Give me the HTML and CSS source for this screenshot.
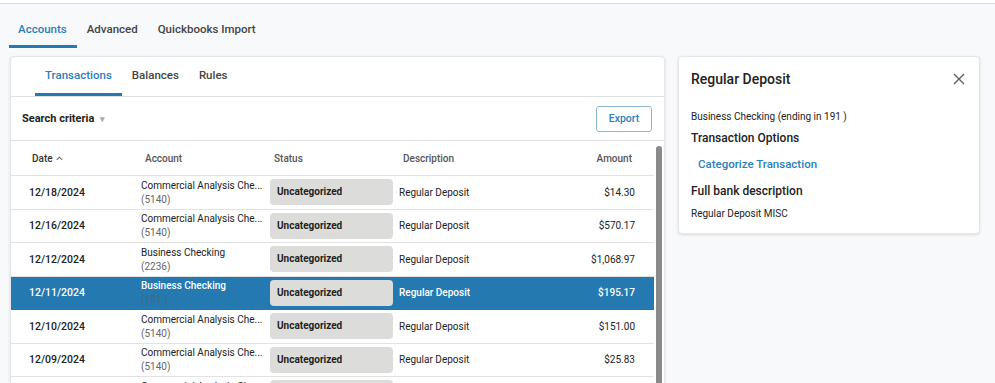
FILE: index.html
```html
<!DOCTYPE html>
<html lang="en">
<head>
    <meta charset="UTF-8">
    <meta name="viewport" content="width=device-width, initial-scale=1.0">
    <title>Accounts - Transactions</title>
    <link rel="stylesheet" href="styles.css">
</head>
<body>
    <div class="topbar"></div>

    <div class="main-tabs">
        <div class="tab active">Accounts</div>
        <div class="tab">Advanced</div>
        <div class="tab">Quickbooks Import</div>
    </div>

    <div class="layout">
        <div class="card list-card">
            <div class="sub-tabs">
                <div class="tab active">Transactions</div>
                <div class="tab">Balances</div>
                <div class="tab">Rules</div>
            </div>

            <div class="search-row">
                <div class="search-toggle">Search criteria <span class="caret">&#9662;</span></div>
                <button class="btn-outline">Export</button>
            </div>

            <div class="table-wrap">
                <div class="table">
                    <div class="row head">
                        <div class="cell date">Date
                            <svg class="sort" width="9" height="9" viewBox="0 0 10 10"><path d="M2 6.5 L5 3.5 L8 6.5" fill="none" stroke="#666" stroke-width="1.2"/></svg>
                        </div>
                        <div class="cell">Account</div>
                        <div class="cell">Status</div>
                        <div class="cell">Description</div>
                        <div class="cell amount">Amount</div>
                    </div>

                    <div class="row">
                        <div class="cell date">12/18/2024</div>
                        <div class="cell account"><span>Commercial Analysis Che...</span><span class="acct-no">(5140)</span></div>
                        <div class="cell"><span class="chip">Uncategorized</span></div>
                        <div class="cell">Regular Deposit</div>
                        <div class="cell amount">$14.30</div>
                    </div>
                    <div class="row">
                        <div class="cell date">12/16/2024</div>
                        <div class="cell account"><span>Commercial Analysis Che...</span><span class="acct-no">(5140)</span></div>
                        <div class="cell"><span class="chip">Uncategorized</span></div>
                        <div class="cell">Regular Deposit</div>
                        <div class="cell amount">$570.17</div>
                    </div>
                    <div class="row">
                        <div class="cell date">12/12/2024</div>
                        <div class="cell account"><span>Business Checking</span><span class="acct-no">(2236)</span></div>
                        <div class="cell"><span class="chip">Uncategorized</span></div>
                        <div class="cell">Regular Deposit</div>
                        <div class="cell amount">$1,068.97</div>
                    </div>
                    <div class="row selected">
                        <div class="cell date">12/11/2024</div>
                        <div class="cell account"><span>Business Checking</span><span class="acct-no">(191 )</span></div>
                        <div class="cell"><span class="chip">Uncategorized</span></div>
                        <div class="cell">Regular Deposit</div>
                        <div class="cell amount">$195.17</div>
                    </div>
                    <div class="row">
                        <div class="cell date">12/10/2024</div>
                        <div class="cell account"><span>Commercial Analysis Che...</span><span class="acct-no">(5140)</span></div>
                        <div class="cell"><span class="chip">Uncategorized</span></div>
                        <div class="cell">Regular Deposit</div>
                        <div class="cell amount">$151.00</div>
                    </div>
                    <div class="row">
                        <div class="cell date">12/09/2024</div>
                        <div class="cell account"><span>Commercial Analysis Che...</span><span class="acct-no">(5140)</span></div>
                        <div class="cell"><span class="chip">Uncategorized</span></div>
                        <div class="cell">Regular Deposit</div>
                        <div class="cell amount">$25.83</div>
                    </div>
                    <div class="row">
                        <div class="cell date">12/06/2024</div>
                        <div class="cell account"><span>Commercial Analysis Che...</span><span class="acct-no">(5140)</span></div>
                        <div class="cell"><span class="chip">Uncategorized</span></div>
                        <div class="cell">Regular Deposit</div>
                        <div class="cell amount">$88.40</div>
                    </div>
                </div>
                <div class="scroll-track"><div class="scroll-thumb"></div></div>
            </div>
        </div>

        <div class="card detail-card">
            <div class="detail-head">
                <h2>Regular Deposit</h2>
                <svg class="close" width="12" height="12" viewBox="0 0 12 12"><path d="M1 1 L11 11 M11 1 L1 11" stroke="#5f5f5f" stroke-width="1.4"/></svg>
            </div>
            <p class="small">Business Checking (ending in 191 )</p>
            <h3>Transaction Options</h3>
            <a class="link" href="#">Categorize Transaction</a>
            <h3>Full bank description</h3>
            <p class="small">Regular Deposit MISC</p>
        </div>
    </div>
</body>
</html>
```

FILE: styles.css
```css
* {
    margin: 0;
    padding: 0;
    box-sizing: border-box;
    font-family: Roboto, "Liberation Sans", Arial, sans-serif;
}

body {
    background: #f8f9fb;
    color: #222;
    height: 383px;
    overflow: hidden;
}

.topbar {
    height: 4px;
    background: #fff;
    border-bottom: 1px solid #dcdcdc;
}

.main-tabs {
    display: flex;
    padding-left: 9px;
}

.tab {
    padding: 18px 10px 9px;
    line-height: 14px;
    font-size: 11.5px;
    font-weight: 500;
    color: #444;
    border-bottom: 3px solid transparent;
}

.main-tabs .tab:first-child {
    padding-left: 9px;
}

.tab.active {
    color: #2a7fba;
    border-bottom-color: #2479b0;
}

.layout {
    display: flex;
    gap: 13px;
    margin: 8px 15px 0 10px;
    align-items: flex-start;
}

.card {
    background: #fff;
    border: 1px solid #e4e6ea;
    border-radius: 4px;
    box-shadow: 0 1px 3px rgba(0,0,0,0.12);
}

.list-card {
    width: 655px;
    flex-shrink: 0;
}

.sub-tabs {
    display: flex;
    padding-left: 24px;
    border-bottom: 1px solid #e0e0e0;
}

.sub-tabs .tab {
    padding: 11px 10px 11px;
    line-height: 14px;
}

.search-row {
    display: flex;
    justify-content: space-between;
    align-items: center;
    height: 44px;
    padding: 0 12px 0 11px;
    border-bottom: 1px solid #e0e0e0;
}

.search-toggle {
    font-size: 11px;
    font-weight: 700;
    color: #222;
}

.caret {
    color: #aaa;
    font-size: 9px;
    margin-left: 3px;
}

.btn-outline {
    width: 56px;
    height: 26px;
    background: #fff;
    border: 1px solid #8fb8d6;
    border-radius: 3px;
    color: #2a7fba;
    font-size: 10.5px;
    font-weight: 500;
}

.table-wrap {
    display: flex;
}

.table {
    flex: 1;
}

.row {
    display: grid;
    grid-template-columns: 126px 129px 129px 1fr 120px;
    align-items: center;
    height: 33.5px;
    border-bottom: 1px solid #e2e2e2;
    font-size: 10px;
    color: #222;
}

.row.head {
    height: 35px;
    font-size: 10px;
    font-weight: 500;
    color: #555;
}

.cell {
    padding-left: 4px;
    white-space: nowrap;
}

.row.head .cell {
    padding-left: 8px;
}

.cell.date {
    padding-left: 18px;
    font-weight: 500;
    font-size: 10.5px;
}

.row.head .cell.date {
    padding-left: 21px;
    font-size: 10px;
    color: #333;
}

.sort {
    vertical-align: -1px;
}

.cell.amount {
    text-align: right;
    padding-right: 19px;
}

.row.head .cell.amount {
    padding-right: 22px;
}

.account {
    display: flex;
    flex-direction: column;
    line-height: 14px;
    padding-top: 1px;
}

.acct-no {
    color: #666;
}

.chip {
    display: block;
    width: 123px;
    height: 26px;
    line-height: 26px;
    padding-left: 7px;
    background: #dcdcdb;
    border-radius: 4px;
    font-weight: 700;
    color: #222;
}

.row.selected {
    background: #2479b0;
    color: #fff;
    border-bottom-color: #2479b0;
}

.row.selected .cell {
    font-weight: 500;
}

.row.selected .acct-no {
    color: #3f6a8a;
}

.row.selected .chip {
    font-weight: 700;
    color: #222;
}

.scroll-track {
    width: 10px;
    padding: 5px 2px 0 2px;
}

.scroll-thumb {
    height: 400px;
    background: #8a8a8a;
    border-radius: 3px;
}

.detail-card {
    width: 302px;
    padding: 0 12px 14px;
}

.detail-head {
    display: flex;
    justify-content: space-between;
    align-items: center;
    height: 42px;
    padding-top: 2px;
}

.detail-head h2 {
    font-size: 14px;
    font-weight: 500;
    color: #222;
}

.close {
    margin-right: 2px;
}

.small {
    font-size: 10px;
    color: #222;
}

.detail-card .small:first-of-type {
    margin-top: 12px;
}

h3 {
    font-size: 12px;
    font-weight: 500;
    color: #222;
    margin-top: 9px;
}

.link {
    display: block;
    margin: 12px 0 0 7px;
    font-size: 11.5px;
    font-weight: 500;
    color: #2a7fba;
    text-decoration: none;
}

.link + h3 {
    margin-top: 13px;
}

h3 + .small {
    margin-top: 10px;
}
```
